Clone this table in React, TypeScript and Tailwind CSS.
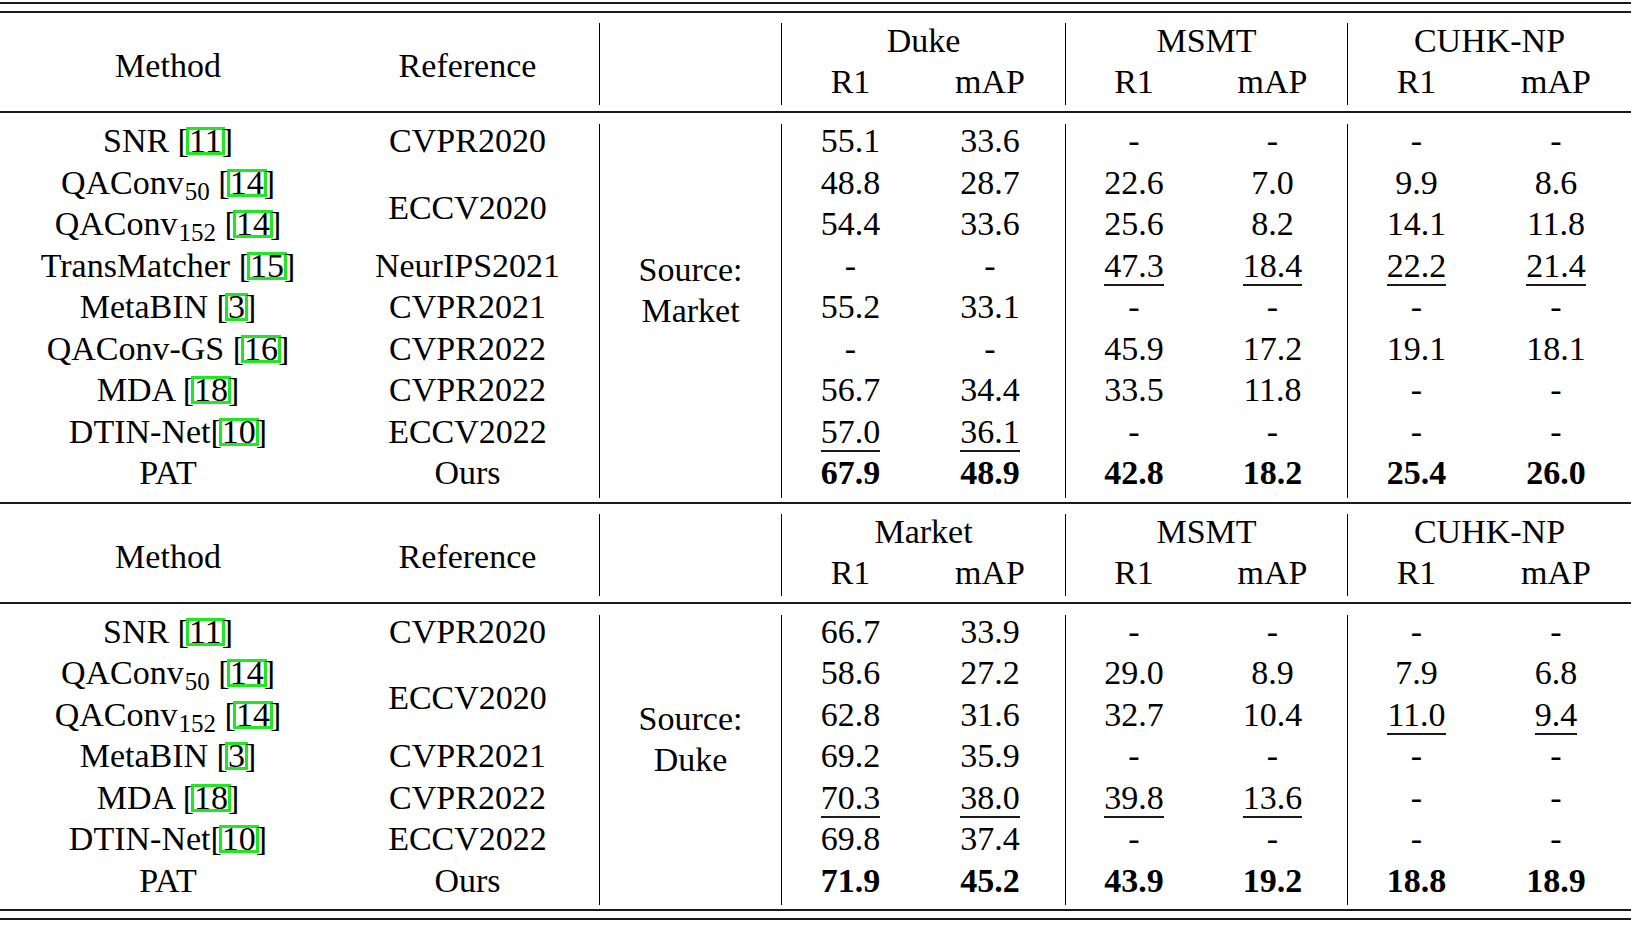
const GRID =
  "grid grid-cols-[336px_263px_182px_142px_142px_141px_141px_142px_142px]";

type Row = {
  name: React.ReactNode;
  ref?: string;
  vals: string[];
  bold?: boolean;
};

const Cite = ({ n }: { n: string }) => (
  <span className="inline-block leading-[22px] border-[3px] border-[#1ee81e] -mx-[3px]">
    {n}
  </span>
);

const Sub = ({ n }: { n: string }) => (
  <span className="relative top-[6px] text-[25px] ml-[1px]">{n}</span>
);

const Rule = () => <div className="h-[2px] bg-[#1a1a1a]" />;

const table1: Row[] = [
  { name: <>SNR [<Cite n="11" />]</>, ref: "CVPR2020", vals: ["55.1", "33.6", "-", "-", "-", "-"] },
  { name: <>QAConv<Sub n="50" /> [<Cite n="14" />]</>, ref: "ECCV2020", vals: ["48.8", "28.7", "22.6", "7.0", "9.9", "8.6"] },
  { name: <>QAConv<Sub n="152" /> [<Cite n="14" />]</>, vals: ["54.4", "33.6", "25.6", "8.2", "14.1", "11.8"] },
  { name: <>TransMatcher [<Cite n="15" />]</>, ref: "NeurIPS2021", vals: ["-", "-", "_47.3", "_18.4", "_22.2", "_21.4"] },
  { name: <>MetaBIN [<Cite n="3" />]</>, ref: "CVPR2021", vals: ["55.2", "33.1", "-", "-", "-", "-"] },
  { name: <>QAConv-GS [<Cite n="16" />]</>, ref: "CVPR2022", vals: ["-", "-", "45.9", "17.2", "19.1", "18.1"] },
  { name: <>MDA [<Cite n="18" />]</>, ref: "CVPR2022", vals: ["56.7", "34.4", "33.5", "11.8", "-", "-"] },
  { name: <>DTIN-Net[<Cite n="10" />]</>, ref: "ECCV2022", vals: ["_57.0", "_36.1", "-", "-", "-", "-"] },
  { name: "PAT", ref: "Ours", vals: ["67.9", "48.9", "42.8", "18.2", "25.4", "26.0"], bold: true },
];

const table2: Row[] = [
  { name: <>SNR [<Cite n="11" />]</>, ref: "CVPR2020", vals: ["66.7", "33.9", "-", "-", "-", "-"] },
  { name: <>QAConv<Sub n="50" /> [<Cite n="14" />]</>, ref: "ECCV2020", vals: ["58.6", "27.2", "29.0", "8.9", "7.9", "6.8"] },
  { name: <>QAConv<Sub n="152" /> [<Cite n="14" />]</>, vals: ["62.8", "31.6", "32.7", "10.4", "_11.0", "_9.4"] },
  { name: <>MetaBIN [<Cite n="3" />]</>, ref: "CVPR2021", vals: ["69.2", "35.9", "-", "-", "-", "-"] },
  { name: <>MDA [<Cite n="18" />]</>, ref: "CVPR2022", vals: ["_70.3", "_38.0", "_39.8", "_13.6", "-", "-"] },
  { name: <>DTIN-Net[<Cite n="10" />]</>, ref: "ECCV2022", vals: ["69.8", "37.4", "-", "-", "-", "-"] },
  { name: "PAT", ref: "Ours", vals: ["71.9", "45.2", "43.9", "19.2", "18.8", "18.9"], bold: true },
];

const subCls = (i: number) =>
  `text-center ${i % 2 === 0 ? "border-l border-black pr-[4px]" : "pr-[8px]"}`;

function Header({ group }: { group: string }) {
  return (
    <div className="pt-[10px] pb-[6px]">
      <div className={`${GRID} auto-rows-[41px] leading-[35px]`}>
        <div className="row-span-2 flex items-center justify-center pt-[3px]">Method</div>
        <div className="row-span-2 flex items-center justify-center pt-[3px]">Reference</div>
        <div className="row-span-2 border-l border-black" />
        {[group, "MSMT", "CUHK-NP"].map((g) => (
          <div key={g} className="col-span-2 border-l border-black text-center">
            {g}
          </div>
        ))}
        {["R1", "mAP", "R1", "mAP", "R1", "mAP"].map((h, i) => (
          <div key={i} className={subCls(i)}>
            {h}
          </div>
        ))}
      </div>
    </div>
  );
}

function Body({ rows, source }: { rows: Row[]; source: string }) {
  const span = rows.length === 9 ? "row-span-9" : "row-span-7";
  return (
    <div className="pt-[11px] pb-[4px]">
      <div className={`${GRID} auto-rows-[41.5px] leading-[33px]`}>
        <div
          className={`col-start-3 row-start-1 ${span} border-l border-black flex flex-col justify-center items-center pb-[41px] leading-[41px]`}
        >
          <span>Source:</span>
          <span>{source}</span>
        </div>
        {rows.map((r, ri) => (
          <div key={ri} className="contents">
            <div className="col-start-1 text-center whitespace-nowrap">{r.name}</div>
            {r.ref === "ECCV2020" ? (
              <div className="col-start-2 row-span-2 flex items-center justify-center">{r.ref}</div>
            ) : r.ref ? (
              <div className="col-start-2 text-center">{r.ref}</div>
            ) : null}
            {r.vals.map((v, i) => {
              const u = v.startsWith("_");
              const t = u ? v.slice(1) : v;
              return (
                <div
                  key={i}
                  className={`${subCls(i)} ${i === 0 ? "col-start-4" : ""} ${r.bold ? "font-bold" : ""}`}
                >
                  {u ? (
                    <span className="inline-block border-b-2 border-[#1a1a1a] pb-[2px]">{t}</span>
                  ) : (
                    t
                  )}
                </div>
              );
            })}
          </div>
        ))}
      </div>
    </div>
  );
}

export default function App() {
  return (
    <div className="w-[1631px] h-[925px] bg-white text-black text-[34px] font-['Liberation_Serif','Times_New_Roman',serif] overflow-hidden">
      <div className="pt-[2px]">
        <Rule />
        <div className="h-[7px]" />
        <Rule />
        <Header group="Duke" />
        <Rule />
        <Body rows={table1} source="Market" />
        <Rule />
        <Header group="Market" />
        <Rule />
        <Body rows={table2} source="Duke" />
        <Rule />
        <div className="h-[7px]" />
        <Rule />
      </div>
    </div>
  );
}
